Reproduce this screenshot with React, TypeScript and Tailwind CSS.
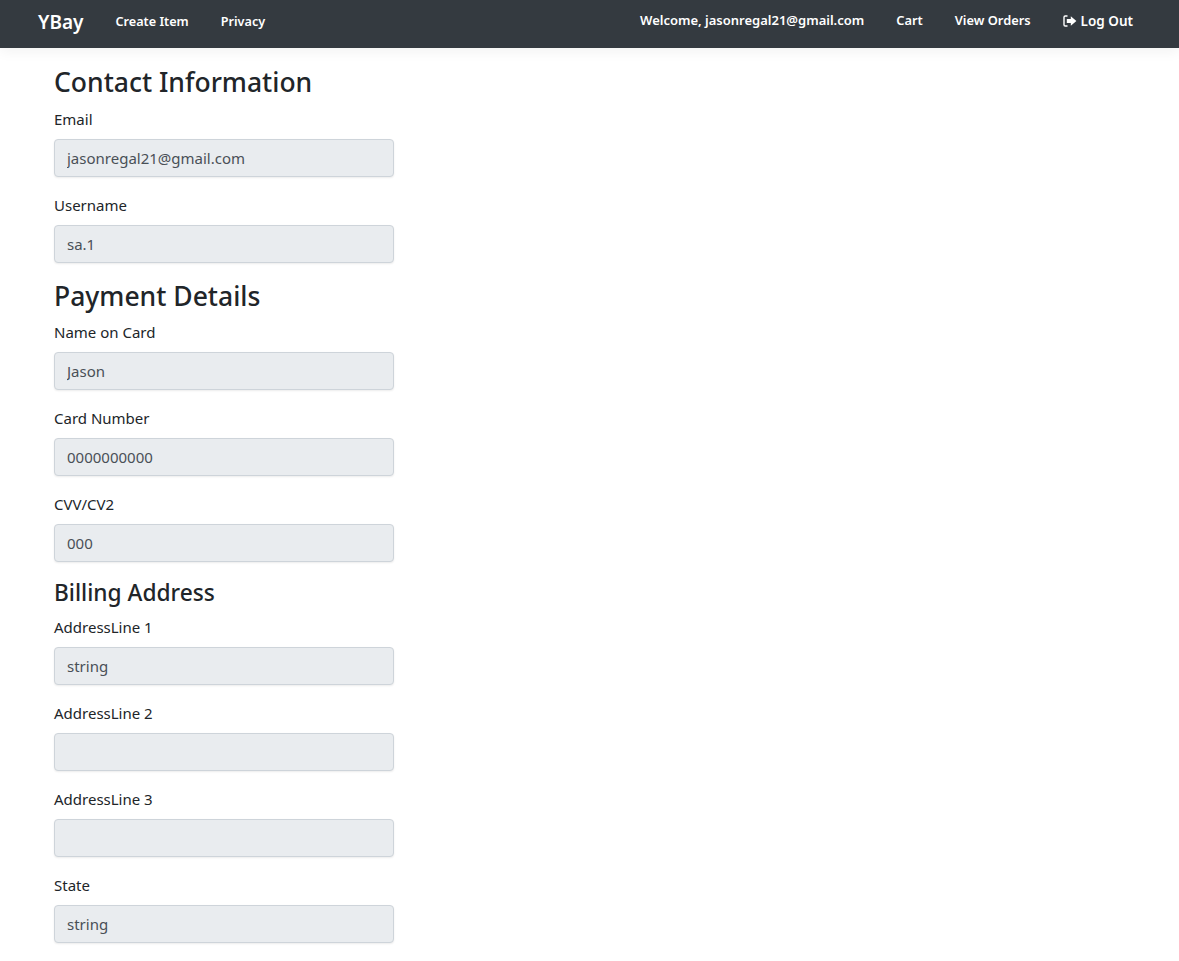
const sections = [
  {
    title: "Contact Information",
    size: "text-[26.5px] leading-[33.6px]",
    fields: [
      { label: "Email", value: "jasonregal21@gmail.com" },
      { label: "Username", value: "sa.1" },
    ],
  },
  {
    title: "Payment Details",
    size: "text-[26.5px] leading-[33.6px]",
    fields: [
      { label: "Name on Card", value: "Jason" },
      { label: "Card Number", value: "0000000000" },
      { label: "CVV/CV2", value: "000" },
    ],
  },
  {
    title: "Billing Address",
    size: "text-[22.7px] leading-[28.8px]",
    fields: [
      { label: "AddressLine 1", value: "string" },
      { label: "AddressLine 2", value: "" },
      { label: "AddressLine 3", value: "" },
      { label: "State", value: "string" },
    ],
  },
];

// solid arrow leaving an open bracket, the nav's sign-out glyph
const LogOutIcon = () => (
  <svg viewBox="0 0 14 12" className="w-[14px] h-3" aria-hidden="true">
    <path d="M4.5 1H2.2C1.4 1 1 1.4 1 2.2v7.6c0 .8.4 1.2 1.2 1.2h2.3" fill="none" stroke="currentColor" strokeWidth="1.4" />
    <path d="M3.8 4h4V1.2L13.4 6l-5.6 4.8V8h-4z" fill="currentColor" />
  </svg>
);

const App = () => {
  return (
    <div className="min-h-[961px] bg-white font-['Noto_Sans',sans-serif] text-[15px] text-[#212529] overflow-hidden">
      <header className="h-12 pb-1.5 bg-[#343a40] shadow-[0_4px_12px_rgba(0,0,0,0.05)] flex items-center justify-between pl-[38px] pr-[46px] text-white font-semibold">
        <div className="flex items-center">
          <span className="text-[19px] pt-0.5">YBay</span>
          <a className="ml-8 text-[12.65px]">Create Item</a>
          <a className="ml-8 text-[12.65px]">Privacy</a>
        </div>
        <div className="flex items-center gap-8 text-[12.85px]">
          <a className="text-[13px]">Welcome, jasonregal21@gmail.com</a>
          <a>Cart</a>
          <a>View Orders</a>
          <a className="flex items-center gap-1 text-[13.5px]">
            <LogOutIcon />
            Log Out
          </a>
        </div>
      </header>

      <main className="pl-[54px] pt-[17px] w-[394px] box-content">
        {sections.map((section) => (
          <section key={section.title}>
            <h3 className={`${section.size} font-medium pt-px mb-[7px]`}>{section.title}</h3>
            {section.fields.map((field) => (
              <div key={field.label} className="mb-4">
                <label className="block leading-6 mb-2">{field.label}</label>
                <input
                  disabled
                  value={field.value}
                  className="block w-[340px] h-[38px] px-3 rounded bg-[#e9ecef] border border-[#ced4da] shadow-[0_1px_2px_rgba(0,0,0,0.08)] text-[#495057] opacity-100"
                />
              </div>
            ))}
          </section>
        ))}
      </main>
    </div>
  );
};

export default App;
